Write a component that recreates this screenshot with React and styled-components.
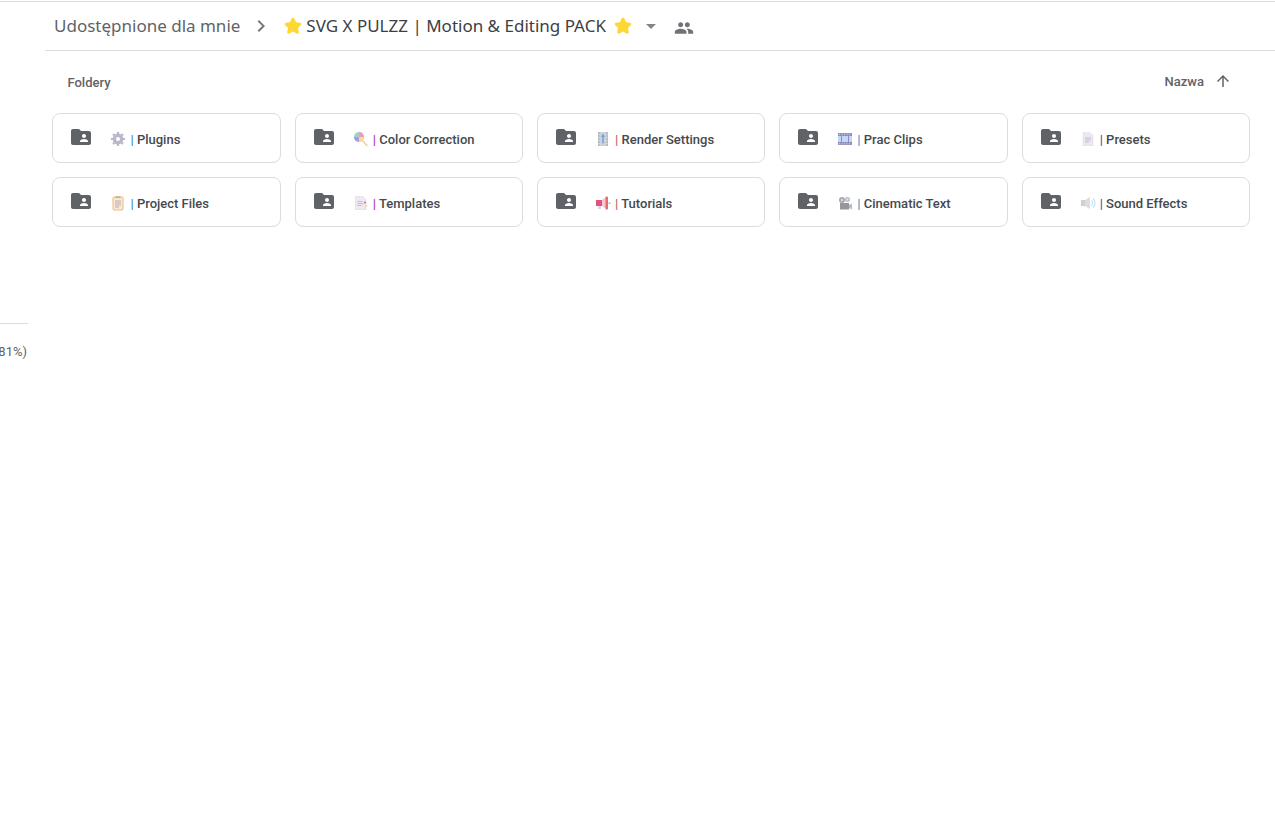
import React from "react";
import styled, { createGlobalStyle } from "styled-components";

const Global = createGlobalStyle`
  html, body { margin: 0; padding: 0; background: #fff; }
  body { font-family: Roboto, "Liberation Sans", sans-serif; }
`;

const Page = styled.div`
  width: 1275px;
  height: 823px;
  overflow: hidden;
  display: flex;
  flex-direction: column;
  padding-top: 1px;
  box-sizing: border-box;
`;
const TopRule = styled.div`
  height: 1px;
  background: #dadce0;
  flex: none;
`;
const Body = styled.div`
  flex: 1;
  display: flex;
  min-height: 0;
`;
const Sidebar = styled.aside`
  width: 45px;
  flex: none;
  padding-top: 321px;
  box-sizing: border-box;
`;
const SideRule = styled.div`
  width: 28px;
  height: 1px;
  background: #dadce0;
`;
const Storage = styled.div`
  width: 27px;
  margin-top: 20px;
  display: flex;
  justify-content: flex-end;
  font-size: 13px;
  line-height: 16px;
  color: #5f6368;
  white-space: nowrap;
`;
const Main = styled.main`
  flex: 1;
  min-width: 0;
`;
const Header = styled.header`
  box-sizing: border-box;
  border-bottom: 1px solid #dadce0;
  height: 49px;
  display: flex;
  align-items: center;
  padding-left: 9px;
`;
const Crumb = styled.span`
  font-family: "Noto Sans", Roboto, sans-serif;
  font-size: 17px;
  color: #5f6368;
  margin-top: -2px;
`;
const Chevron = styled.svg`
  width: 24px;
  height: 24px;
  fill: #5f6368;
  opacity: 0.85;
  margin: 0 10px 0 9px;
  flex: none;
`;
const Title = styled.span`
  font-family: "Noto Sans", Roboto, sans-serif;
  font-size: 17px;
  color: #3c4043;
  margin: -2px 7px 0 3px;
`;
const Star = styled.svg`
  width: 20px;
  height: 20px;
  flex: none;
`;
const Caret = styled.span`
  width: 0;
  height: 0;
  border-left: 5px solid transparent;
  border-right: 5px solid transparent;
  border-top: 5px solid #80868b;
  margin: 1px 0 0 13px;
  flex: none;
`;
const People = styled.svg`
  width: 20px;
  height: 20px;
  fill: #6f7378;
  margin: 4px 0 0 18px;
  flex: none;
`;
const Content = styled.section`
  padding: 0 25.05px 0 7.45px;
`;
const SectionHead = styled.div`
  height: 62px;
  display: flex;
  align-items: center;
  justify-content: space-between;
  padding: 0 18px 0 15px;
  font-size: 13px;
  font-weight: 500;
  color: #5f6368;
`;
const Sort = styled.div`
  display: flex;
  align-items: center;
  gap: 10px;
  margin-top: -2px;
`;
const SortIcon = styled.svg`
  width: 18px;
  height: 18px;
  fill: #5f6368;
`;
const Grid = styled.div`
  display: grid;
  grid-template-columns: repeat(5, 228.3px);
  gap: 14px;
`;
const Card = styled.div`
  height: 50px;
  box-sizing: border-box;
  border: 1px solid #dadce0;
  border-radius: 8px;
  display: flex;
  align-items: center;
  padding-left: 16px;
`;
const FolderIcon = styled.svg`
  width: 24px;
  height: 24px;
  fill: #5f6368;
  flex: none;
  margin-top: -2px;
`;
const Emoji = styled.svg`
  width: 16px;
  height: 16px;
  flex: none;
  margin: 2px 4px 0 17px;
`;
const Label = styled.span`
  font-size: 13px;
  font-weight: 500;
  color: #45494e;
  white-space: nowrap;
  margin-top: 3px;
`;
const Bar = styled.span`
  color: ${(p) => p.$tint};
`;

const glyphs = {
  gear: (
    <g>
      <circle cx="8" cy="8" r="3.7" fill="none" stroke="#bcb7c8" strokeWidth="3.400" />
      <path d="M8 1v2.400M8 12.600V15M1 8h2.400M12.600 8H15M3 3l1.800 1.800M11.200 11.200L13 13M3 13l1.800-1.800M11.200 4.800L13 3" stroke="#bcb7c8" strokeWidth="2.200" />
    </g>
  ),
  lollipop: (
    <g>
      <path d="M8.500 8.500l5.500 6" stroke="#f2cfa0" strokeWidth="1.600" strokeLinecap="round" />
      <circle cx="6" cy="6" r="5" fill="#8fd9c8" />
      <path d="M6 6V1A5 5 0 0 1 11 6z" fill="#f49ac1" />
      <path d="M6 6h5a5 5 0 0 1-5 5z" fill="#f7e07e" />
      <path d="M6 6v5a5 5 0 0 1-5-5z" fill="#a99ae8" />
      <circle cx="6" cy="6" r="1.200" fill="#f4a8b8" />
    </g>
  ),
  render: (
    <g>
      <rect x="3" y="1" width="10" height="14" fill="#d0d2d8" />
      <path d="M3 2h1.600M3 5h1.600M3 8h1.600M3 11h1.600M3 14h1.600M11.400 2H13M11.400 5H13M11.400 8H13M11.400 11H13M11.400 14H13" stroke="#979ba3" strokeWidth="1" />
      <path d="M8 2.500L5.800 6h1.400v6.500h1.600V6h1.400z" fill="#6fa8e0" />
    </g>
  ),
  film: (
    <g>
      <rect x="1" y="2" width="14" height="12" fill="#8f90b8" />
      <rect x="1" y="4.500" width="14" height="7" fill="#c4d6f5" />
      <path d="M4.500 4.500v7M11.500 4.500v7M1 4.500h14M1 11.500h14" stroke="#8f90b8" strokeWidth="1" />
      <path d="M2 3.200h12M2 12.800h12" stroke="#dfe3f2" strokeWidth="1" strokeDasharray="1 1.500" />
    </g>
  ),
  preset: (
    <g>
      <path d="M3 1.500h7l3 3v10H3z" fill="#ece8f1" stroke="#e0dbe8" strokeWidth=".6" />
      <path d="M5 7h6M5 9h6M5 11h4" stroke="#c3bdcc" strokeWidth="1" />
    </g>
  ),
  clipboard: (
    <g>
      <rect x="3" y="2" width="10" height="13" rx="1" fill="#f8e9d8" stroke="#ecb98a" strokeWidth="1" />
      <rect x="5.500" y="1" width="5" height="2.200" fill="#d9b68f" />
      <path d="M5 6h6M5 8h6M5 10h6M5 12h4" stroke="#b8b0a8" strokeWidth="1" />
    </g>
  ),
  template: (
    <g>
      <path d="M2.500 1.500h7.500l3 3v10h-10.500z" fill="#eee9f2" stroke="#ddd6e4" strokeWidth=".6" />
      <path d="M4.500 6.500h5M4.500 8.500h6M4.500 10.500h4" stroke="#c4bdcd" strokeWidth="1" />
      <circle cx="12" cy="7.500" r="1" fill="#e05aa8" />
      <circle cx="13" cy="11" r="1" fill="#f2d77a" />
    </g>
  ),
  megaphone: (
    <g>
      <rect x="1" y="5" width="6" height="6" fill="#e3527f" />
      <path d="M7 5l4-3v12l-4-3z" fill="#f2c8d2" />
      <rect x="10.500" y="1.500" width="2.500" height="13" rx="1" fill="#ea6a6a" />
      <path d="M13.500 7.500h2v1.500h-2z" fill="#b0b0b0" />
      <rect x="3" y="11" width="3" height="3" fill="#d9d9de" />
    </g>
  ),
  camera: (
    <g>
      <circle cx="5" cy="5" r="3" fill="#a9a9af" />
      <circle cx="10.500" cy="4.500" r="2.500" fill="#bcbcc2" />
      <rect x="3" y="8" width="9" height="6.500" fill="#96969c" />
      <path d="M12 10l3-1.500v6l-3-1.500z" fill="#b9b9bf" />
      <circle cx="5" cy="5" r="1" fill="#ececef" />
      <circle cx="10.500" cy="4.500" r="1" fill="#ececef" />
    </g>
  ),
  speaker: (
    <g>
      <rect x="1" y="5" width="4" height="6" fill="#cfcfd6" />
      <path d="M5 5l5-3v12l-5-3z" fill="#dcdce1" />
      <path d="M11.500 5.500a3.500 3.500 0 0 1 0 5M13 3.500a6 6 0 0 1 0 9" fill="none" stroke="#bfe0f5" strokeWidth="1.100" />
    </g>
  ),
};

const folders = [
  { name: "Plugins", icon: "gear", tint: "#3a8fc2" },
  { name: "Color Correction", icon: "lollipop", tint: "#b03ab8" },
  { name: "Render Settings", icon: "render", tint: "#c0645a" },
  { name: "Prac Clips", icon: "film", tint: "#2f9fd0" },
  { name: "Presets", icon: "preset", tint: "#7a4a86" },
  { name: "Project Files", icon: "clipboard", tint: "#3a8fc2" },
  { name: "Templates", icon: "template", tint: "#b03ab8" },
  { name: "Tutorials", icon: "megaphone", tint: "#c0645a" },
  { name: "Cinematic Text", icon: "camera", tint: "#2f9fd0" },
  { name: "Sound Effects", icon: "speaker", tint: "#7a4a86" },
];

const StarIcon = () => (
  <Star viewBox="0 0 20 20">
    <path
      d="M10 3.200l2 4.400 4.800.6-3.500 3.200 1 4.800L10 13.800l-4.300 2.400 1-4.800-3.500-3.200 4.800-.6z"
      fill="#fdd835"
      stroke="#fdd835"
      strokeWidth="3"
      strokeLinejoin="round"
    />
  </Star>
);

export default function App() {
  return (
    <Page>
      <Global />
      <TopRule />
      <Body>
        <Sidebar>
          <SideRule />
          <Storage>81%)</Storage>
        </Sidebar>
        <Main>
          <Header>
            <Crumb>Udostępnione dla mnie</Crumb>
            <Chevron viewBox="0 0 24 24">
              <path d="M8.590 16.590 13.170 12 8.590 7.410 10 6l6 6-6 6z" />
            </Chevron>
            <StarIcon />
            <Title>SVG X PULZZ | Motion &amp; Editing PACK</Title>
            <StarIcon />
            <Caret />
            <People viewBox="0 0 24 24">
              <path d="M16 11c1.660 0 2.990-1.340 2.990-3S17.660 5 16 5c-1.660 0-3 1.340-3 3s1.340 3 3 3zm-8 0c1.660 0 2.990-1.340 2.990-3S9.660 5 8 5C6.340 5 5 6.340 5 8s1.340 3 3 3zm0 2c-2.330 0-7 1.170-7 3.500V19h14v-2.500c0-2.330-4.670-3.500-7-3.500zm8 0c-.29 0-.62.02-.97.05 1.160.84 1.970 1.970 1.970 3.450V19h6v-2.500c0-2.330-4.670-3.500-7-3.500z" />
            </People>
          </Header>
          <Content>
            <SectionHead>
              <span>Foldery</span>
              <Sort>
                <span>Nazwa</span>
                <SortIcon viewBox="0 0 24 24">
                  <path d="M4 12l1.410 1.410L11 7.830V20h2V7.830l5.580 5.590L20 12l-8-8-8 8z" />
                </SortIcon>
              </Sort>
            </SectionHead>
            <Grid>
              {folders.map((f) => (
                <Card key={f.name}>
                  <FolderIcon viewBox="0 0 24 24">
                    <path d="M20 6h-8l-2-2H4c-1.100 0-1.990.9-1.990 2L2 18c0 1.100.9 2 2 2h16c1.100 0 2-.9 2-2V8c0-1.100-.9-2-2-2zm-5 3c1.100 0 2 .9 2 2s-.9 2-2 2-2-.9-2-2 .9-2 2-2zm4 8h-8v-1c0-1.330 2.670-2 4-2s4 .67 4 2v1z" />
                  </FolderIcon>
                  <Emoji viewBox="0 0 16 16">{glyphs[f.icon]}</Emoji>
                  <Label>
                    <Bar $tint={f.tint}>|</Bar> {f.name}
                  </Label>
                </Card>
              ))}
            </Grid>
          </Content>
        </Main>
      </Body>
    </Page>
  );
}
